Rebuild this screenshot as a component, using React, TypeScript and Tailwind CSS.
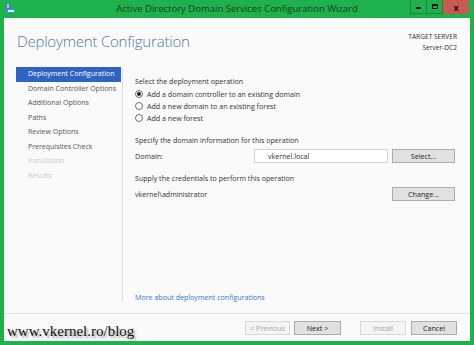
import React from "react";

const F = { fontFamily: '"Open Sans", "Noto Sans", sans-serif' };

function RadioDot({ checked }: { checked?: boolean }) {
  return (
    <span className="w-[8px] h-[8px] rounded-full border border-[#6d6d6d] bg-white flex items-center justify-center shrink-0">
      {checked && <span className="w-[4px] h-[4px] rounded-full bg-[#222]" />}
    </span>
  );
}

function Btn({ children, disabled, w }: { children: React.ReactNode; disabled?: boolean; w: string }) {
  return (
    <div
      className={
        "h-[14px] flex items-center justify-center text-[7.2px] border shrink-0 " +
        w +
        " " +
        (disabled
          ? "border-[#d9d9d9] bg-[#f4f4f4] text-[#a8a8a8]"
          : "border-[#acacac] bg-[#e1e1e1] text-[#222]")
      }
    >
      {children}
    </div>
  );
}

export default function App() {
  const nav = [
    { t: "Deployment Configuration", s: true },
    { t: "Domain Controller Options" },
    { t: "Additional Options" },
    { t: "Paths" },
    { t: "Review Options" },
    { t: "Prerequisites Check" },
    { t: "Installation", d: true },
    { t: "Results", d: true },
  ];
  return (
    <div className="w-[474px] h-[345px] bg-[#1fb14b] flex flex-col relative overflow-hidden" style={F}>
      {/* title bar */}
      <div className="h-[18px] grid grid-cols-[1fr_auto_1fr] items-start">
        <div className="pl-[5px] pt-[3px]">
          <svg width="11" height="11" viewBox="0 0 11 11">
            <rect x="1" y="0" width="4" height="6" fill="#3d7ad6" />
            <rect x="1" y="6" width="9" height="4" fill="#4f8ee6" />
            <rect x="3" y="7" width="6" height="2" fill="#dfe9f7" />
            <rect x="2" y="1" width="2" height="4" fill="#a9c8f0" />
          </svg>
        </div>
        <div className="pt-[3px] text-[9.5px] text-[#173f1c] leading-[12px] whitespace-nowrap">
          Active Directory Domain Services Configuration Wizard
        </div>
        <div className="flex justify-end pr-[5px]">
          <div className="w-[17px] h-[14px] border border-[#158a38] border-t-0 flex items-center justify-center">
            <span className="w-[5px] h-[2px] bg-[#111] mt-[2px]" />
          </div>
          <div className="w-[16px] h-[14px] border-b border-r border-[#158a38] flex items-center justify-center">
            <span className="w-[6px] h-[5px] border border-[#111] border-t-2" />
          </div>
          <div className="w-[26px] h-[14px] bg-[#c95a52] flex items-center justify-center text-[9px] font-bold text-[#2a0d0d] leading-none">
            x
          </div>
        </div>
      </div>

      {/* content */}
      <div className="mx-[4px] mb-[4px] flex-1 bg-[#fafafa] flex flex-col text-[#333]">
        {/* header */}
        <div className="h-[49px] flex justify-between pl-[13px] pr-[13px]">
          <div className="pt-[12px] text-[15px] leading-[22px] tracking-[-0.2px] text-[#4d7ca4] font-light whitespace-nowrap">
            Deployment Configuration
          </div>
          <div className="pt-[13px] text-right text-[6.6px] leading-[11px] text-[#333]">
            <div>TARGET SERVER</div>
            <div>Server-DC2</div>
          </div>
        </div>

        {/* body */}
        <div className="h-[246px] flex">
          <div className="w-[107px] shrink-0 ml-[12px] mb-[11px] border-r border-[#e0e0e0] flex flex-col">
            {nav.map((n) => (
              <div
                key={n.t}
                className={
                  "h-[14.5px] pl-[12px] flex items-center text-[7px] whitespace-nowrap " +
                  (n.s ? "bg-[#3064c4] text-white mr-[1px]" : n.d ? "text-[#cdcdcd]" : "text-[#555]")
                }
              >
                {n.t}
              </div>
            ))}
          </div>
          <div className="flex-1 min-w-0 pl-[12px] pr-[15px] flex flex-col text-[7.1px] text-[#333]">
            <div className="h-[14px] mt-[7px] flex items-center">Select the deployment operation</div>
            <div className="flex flex-col">
              {[
                { t: "Add a domain controller to an existing domain", c: true },
                { t: "Add a new domain to an existing forest" },
                { t: "Add a new forest" },
              ].map((r) => (
                <div key={r.t} className="h-[12px] flex items-center gap-[4px]">
                  <RadioDot checked={r.c} />
                  <span>{r.t}</span>
                </div>
              ))}
            </div>
            <div className="h-[14px] mt-[9px] flex items-center">Specify the domain information for this operation</div>
            <div className="h-[14px] mt-[2px] flex items-center">
              <span className="w-[119px] shrink-0">Domain:</span>
              <div className="w-[134px] shrink-0 h-[14px] bg-white border border-[#d4d4d4] flex items-center pl-[13px]">
                vkernel.local
              </div>
              <div className="ml-[4px]">
                <Btn w="w-[63px]">Select...</Btn>
              </div>
            </div>
            <div className="h-[14px] mt-[8px] flex items-center">Supply the credentials to perform this operation</div>
            <div className="h-[14px] mt-[2px] flex items-center justify-between">
              <span>vkernel\administrator</span>
              <Btn w="w-[63px]">Change...</Btn>
            </div>
            <div className="flex-1" />
            <div className="h-[12px] mb-[10px] flex items-center text-[#3877c4]">More about deployment configurations</div>
          </div>
        </div>

        {/* footer */}
        <div className="flex-1 border-t border-[#e3e3e3] flex justify-end items-start pt-[7px] pr-[13px]">
          <Btn w="w-[45px]" disabled>
            &lt; Previous
          </Btn>
          <div className="ml-[4px]">
            <Btn w="w-[47px]">Next &gt;</Btn>
          </div>
          <div className="ml-[19px]">
            <Btn w="w-[46px]" disabled>
              Install
            </Btn>
          </div>
          <div className="ml-[5px]">
            <Btn w="w-[46px]">Cancel</Btn>
          </div>
        </div>
      </div>

      <div
        className="absolute left-[7px] bottom-[5px] text-[15px] leading-[18px] text-[#111] whitespace-nowrap"
        style={{ fontFamily: '"Liberation Serif", serif', textShadow: "2px 2px 2px rgba(0,0,0,0.35)" }}
      >
        www.vkernel.ro/blog
      </div>
    </div>
  );
}
